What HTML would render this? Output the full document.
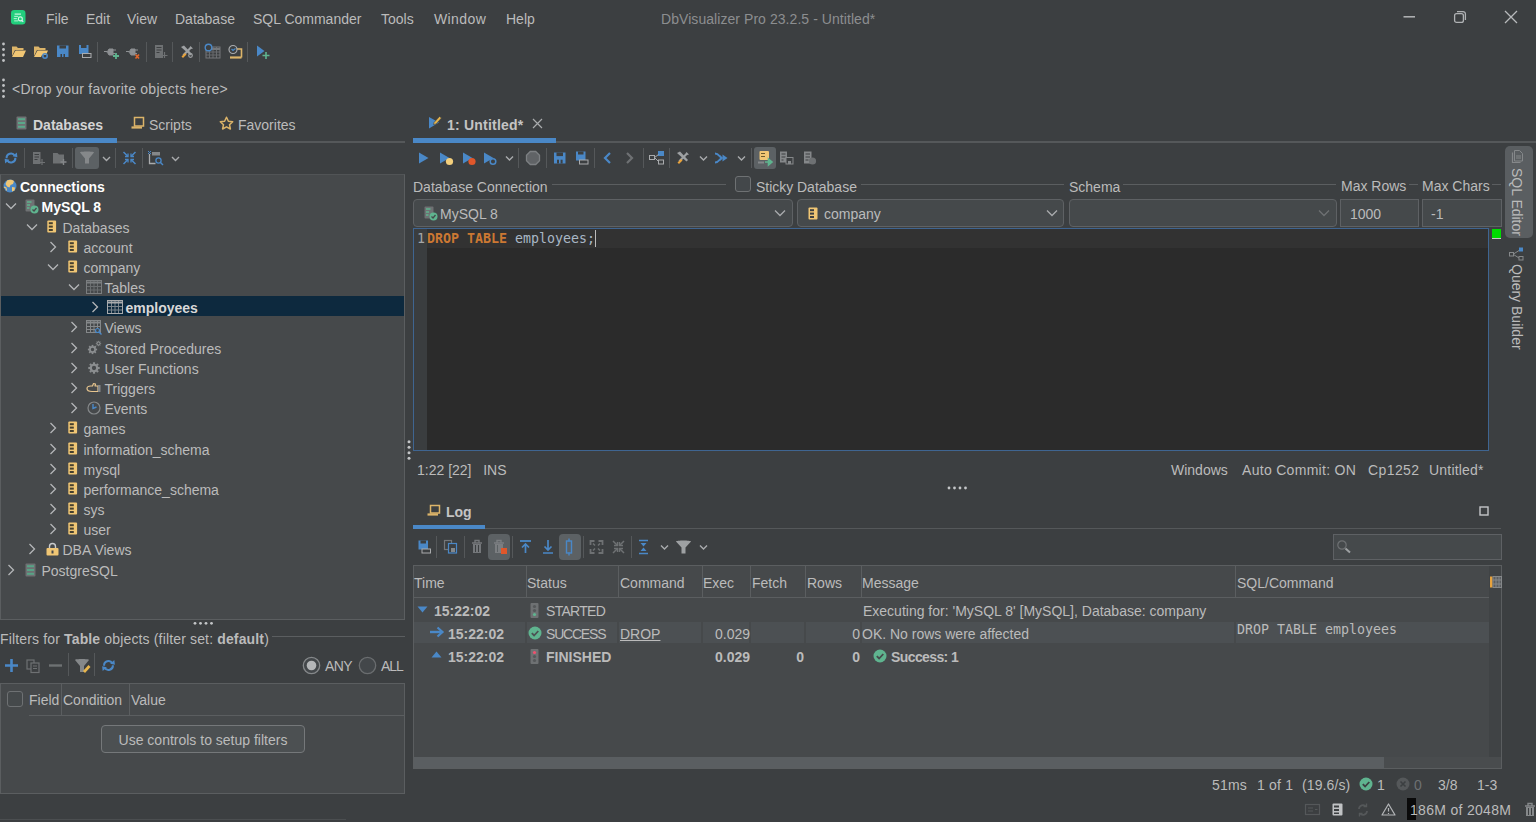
<!DOCTYPE html>
<html lang="en">
<head>
<meta charset="utf-8">
<title>DbVisualizer Pro 23.2.5 - Untitled*</title>
<style>
*{box-sizing:border-box;margin:0;padding:0}
html,body{width:1536px;height:822px;overflow:hidden;background:#3c3f41}
body{position:relative;font-family:"Liberation Sans",sans-serif;font-size:14px;color:#bbbbbb;line-height:20px}
.a{position:absolute;white-space:nowrap}
.t{position:absolute;white-space:nowrap;height:22px;line-height:22px}
.b{font-weight:bold}
.w{color:#ffffff}
.sep{position:absolute;width:1px;background:#515456}
svg{position:absolute;overflow:visible}
.mono{font-family:"DejaVu Sans Mono","Liberation Mono",monospace}
</style>
</head>
<body>
<!--TOP-->
<!-- app icon -->
<svg style="left:10.800px;top:9.500px" width="14.500" height="14.500" viewBox="0 0 16 16"><rect x="0" y="0" width="16" height="16" rx="3.500" fill="#22cf7d"/><path d="M4 4.500h7" stroke="#dffbee" stroke-width="1.200" fill="none"/><path d="M3.500 7h4.500M3 9.500h3.500M3.500 12h4.500" stroke="#b8f3d6" stroke-width="1.100" fill="none"/><circle cx="10.300" cy="9.800" r="2.200" fill="none" stroke="#d4f8e6" stroke-width="1.200"/><path d="M11.900 11.400l1.600 1.600" stroke="#e6e0ff" stroke-width="1.400"/></svg>
<div class="t" style="left:46px;top:8px">File</div>
<div class="t" style="left:86px;top:8px">Edit</div>
<div class="t" style="left:127px;top:8px">View</div>
<div class="t" style="left:175px;top:8px">Database</div>
<div class="t" style="left:253px;top:8px">SQL Commander</div>
<div class="t" style="left:381px;top:8px">Tools</div>
<div class="t" style="left:434px;top:8px;letter-spacing:0.400px">Window</div>
<div class="t" style="left:506px;top:8px">Help</div>
<div class="t" style="left:661px;top:8px;color:#8c8e90;letter-spacing:0.060px">DbVisualizer Pro 23.2.5 - Untitled*</div>
<!-- window controls -->
<svg style="left:1403px;top:10px" width="14" height="14" viewBox="0 0 14 14"><path d="M0.500 6.800h11.500" stroke="#b4b6b8" stroke-width="1.500"/></svg>
<svg style="left:1453px;top:10px" width="14" height="14" viewBox="0 0 14 14"><rect x="1.6" y="3.6" width="8.8" height="8.8" rx="2" fill="none" stroke="#b0b2b4" stroke-width="1.300"/><path d="M4 1.6h6a2.4 2.4 0 0 1 2.4 2.4v6" fill="none" stroke="#b0b2b4" stroke-width="1.300"/></svg>
<svg style="left:1503.500px;top:9.500px" width="14" height="14" viewBox="0 0 14 14"><path d="M1 1l12 12M13 1L1 13" stroke="#b8babc" stroke-width="1.300"/></svg>
<!-- main toolbar -->
<svg style="left:0;top:40px" width="280" height="24" viewBox="0 0 280 24">
<g fill="#c0c2c4"><circle cx="3.500" cy="4" r="1.400"/><circle cx="3.500" cy="9.500" r="1.400"/><circle cx="3.500" cy="15" r="1.400"/><circle cx="3.500" cy="20.500" r="1.400"/></g>
<!-- folder open -->
<path d="M12 6.5h4.5l1.5 1.5h5.5v2h-8.5l-3 6z" fill="#dcb469"/><path d="M15.5 10.5h10.5l-3 6.5h-11z" fill="#f0c674"/>
<!-- folder w gear -->
<path d="M34 6.5h4.5l1.5 1.5h5.5v2h-8.5l-3 6z" fill="#dcb469"/><path d="M37.5 10.5h10.5l-2 4.5h-4l-1 2h-7z" fill="#f0c674"/><circle cx="45" cy="16" r="2.2" fill="none" stroke="#4a88c7" stroke-width="1.6"/>
<!-- save -->
<path d="M57 5.500h11.500v11.500h-11.500z" fill="#4a88c7"/><rect x="59.500" y="5.500" width="6.500" height="3" fill="#3c3f41"/><rect x="60.500" y="14" width="1.500" height="3" fill="#3c3f41"/><rect x="63.500" y="14" width="1.500" height="3" fill="#3c3f41"/>
<!-- save as -->
<path d="M79 5h9.5v9h-9.5z" fill="#4a88c7"/><rect x="81" y="5" width="5.5" height="3" fill="#3c3f41"/><rect x="82.5" y="13.5" width="8.5" height="4" fill="#3c3f41" stroke="#a9abad" stroke-width="1"/>
<rect x="97" y="2" width="1" height="20" fill="#55585a"/>
<!-- plug + -->
<path d="M104 11.5h3.5l1.5-2.5h4v6h-4l-1.5-2.5" fill="#8d9093" stroke="#8d9093" stroke-width="1"/><path d="M113 10h3M113 13.5h2" stroke="#8d9093" stroke-width="1"/><path d="M116 13v6M113 16h6" stroke="#5fb48f" stroke-width="1.8"/>
<!-- plug x -->
<path d="M126 11.5h3.5l1.5-2.5h4v6h-4l-1.5-2.5" fill="#8d9093" stroke="#8d9093" stroke-width="1"/><path d="M135 10h3M135 13.5h2" stroke="#8d9093" stroke-width="1"/><path d="M135.500 14.500l3.500 4M139 14.500l-3.500 4" stroke="#e0662b" stroke-width="1.6"/>
<rect x="146" y="2" width="1" height="20" fill="#55585a"/>
<!-- server grey -->
<rect x="155" y="5" width="8" height="13" fill="#6e7173"/><path d="M156.500 7.500h5M156.500 10h5M156.500 12.500h3" stroke="#3c3f41" stroke-width="1"/><path d="M164.500 12v6M161.500 15.500h6" stroke="#6e7173" stroke-width="1.2"/>
<rect x="172" y="2" width="1" height="20" fill="#55585a"/>
<!-- tools -->
<path d="M181 7l3-1.500 8 8.500-1.500 1.500z" fill="#9ea1a3"/><path d="M190.500 6l2.500 2.500-2 .5-7 7-1.500-1.500 7-7z" fill="#9ea1a3"/><path d="M181.500 16.500l3.500-3.500 1.500 1.500-3.500 3.500z" fill="#e8a33d"/><circle cx="190.500" cy="15.500" r="1.800" fill="none" stroke="#9ea1a3" stroke-width="1.200"/>
<rect x="199" y="2" width="1" height="20" fill="#55585a"/>
<!-- table clock -->
<rect x="206" y="7" width="14" height="11" fill="none" stroke="#74777a" stroke-width="1"/><path d="M206 9h14" stroke="#74777a" stroke-width="2"/><path d="M206 12h14M206 15h14M209.500 7v11M213 7v11M216.500 7v11" stroke="#74777a" stroke-width="1" opacity="0.800"/><circle cx="208.500" cy="7.500" r="3.300" fill="#3c3f41" stroke="#4a88c7" stroke-width="1.400"/>
<!-- clock monitor -->
<path d="M236 9h5.500v8.500" fill="none" stroke="#dcb469" stroke-width="1.600"/><path d="M230 17.500h11.500" stroke="#dcb469" stroke-width="2.200"/><circle cx="233" cy="9.500" r="4" fill="#3c3f41" stroke="#a9abad" stroke-width="1.200"/><path d="M231.500 9l1.500 1.500 2.500-2" stroke="#4a88c7" stroke-width="1.200" fill="none"/>
<rect x="247" y="2" width="1" height="20" fill="#55585a"/>
<!-- run + -->
<path d="M257 5.500l7.500 5.500-7.500 5.500z" fill="#4a88c7"/><path d="M266 12v7M262.500 15.500h7" stroke="#5fb48f" stroke-width="1.600"/>
</svg>
<!-- favorites bar -->
<svg style="left:0;top:77px" width="8" height="22" viewBox="0 0 8 22"><g fill="#c0c2c4"><circle cx="3.500" cy="3" r="1.400"/><circle cx="3.500" cy="8.500" r="1.400"/><circle cx="3.500" cy="14" r="1.400"/><circle cx="3.500" cy="19.500" r="1.400"/></g></svg>
<div class="t" style="left:12px;top:78px;letter-spacing:0.250px">&lt;Drop your favorite objects here&gt;</div>

<!--LEFT-->
<!-- left tabs -->
<svg style="left:16px;top:116px" width="11" height="14" viewBox="0 0 11 14"><rect x="0.5" y="0.5" width="10" height="13" rx="1" fill="#6e7173"/><rect x="2" y="2.2" width="7" height="2" fill="#5aa88a"/><rect x="2" y="6" width="7" height="2" fill="#5aa88a"/><rect x="2" y="9.800" width="7" height="2" fill="#5aa88a"/></svg>
<div class="t b" style="left:33px;top:114px;color:#d4d4d4">Databases</div>
<svg style="left:131px;top:116px" width="14" height="14" viewBox="0 0 14 14"><path d="M3.500 1.500h9v8.500h-9z" fill="none" stroke="#dcb469" stroke-width="1.500"/><path d="M0.500 11.500h10.500" stroke="#dcb469" stroke-width="2.200"/></svg>
<div class="t" style="left:149px;top:114px">Scripts</div>
<svg style="left:219px;top:116px" width="15" height="14" viewBox="0 0 15 14"><path d="M7.500 1.200l1.900 4 4.300.500-3.200 3 .900 4.300-3.900-2.200-3.900 2.200.900-4.300-3.200-3 4.300-.500z" fill="none" stroke="#dcb469" stroke-width="1.500" stroke-linejoin="round"/></svg>
<div class="t" style="left:238px;top:114px">Favorites</div>
<div class="a" style="left:117px;top:141px;width:288px;height:2px;background:#55585a"></div>
<div class="a" style="left:0;top:138px;width:117px;height:5px;background:#4a88c7"></div>
<!-- left toolbar -->
<svg style="left:0;top:146px" width="190" height="24" viewBox="0 0 190 24">
<g transform="translate(11 12)"><path d="M-4.4 0.300A4.4 4.4 0 0 1 3.81 -2.20" fill="none" stroke="#4a88c7" stroke-width="2"/><path d="M1.600 -1.800L6.400 -0.800L5.800 -5.600z" fill="#4a88c7"/><g transform="rotate(180)"><path d="M-4.4 0.300A4.4 4.4 0 0 1 3.81 -2.20" fill="none" stroke="#4a88c7" stroke-width="2"/><path d="M1.600 -1.800L6.400 -0.800L5.800 -5.600z" fill="#4a88c7"/></g></g>
<rect x="24" y="2" width="1" height="20" fill="#55585a"/>
<rect x="33" y="6" width="7.500" height="12" fill="#6e7173"/><path d="M34.500 8.500h4.500M34.500 11h4.500M34.500 13.500h3" stroke="#3c3f41" stroke-width="1"/><path d="M42 13v6M39 16.500h6" stroke="#6e7173" stroke-width="1.200"/>
<path d="M53 7h4.500l1.500 1.500h5v9h-11z" fill="#6e7173"/><path d="M63.500 13v6M60.500 16h6" stroke="#85888a" stroke-width="1.400"/>
<rect x="72" y="2" width="1" height="20" fill="#55585a"/>
<rect x="75" y="1" width="24" height="22" rx="3" fill="#5c6164"/>
<path d="M80 6.500c0-1.200 14-1.200 14 0l-5 6v5h-4v-5z" fill="#85888a"/>
<path d="M103 11l3.500 3.500 3.500-3.500" fill="none" stroke="#a9abad" stroke-width="1.400"/>
<rect x="115" y="2" width="1" height="20" fill="#55585a"/>
<path d="M123.500 6l4.500 4.500M135.500 6l-4.500 4.500M123.500 18l4.500-4.500M135.500 18l-4.500-4.500" stroke="#4a88c7" stroke-width="1.500"/><path d="M125 10.500h3v-3M134 10.500h-3v-3M125 13.500h3v3M134 13.500h-3v3" fill="none" stroke="#4a88c7" stroke-width="1.300"/>
<rect x="142" y="2" width="1" height="20" fill="#55585a"/>
<path d="M149.500 8v9.500h6" fill="none" stroke="#a9abad" stroke-width="1.300"/><rect x="152" y="6" width="8" height="3.500" fill="#85888a"/><path d="M148 5l3 3M151 5l-3 3" stroke="#4a88c7" stroke-width="1"/><circle cx="158.500" cy="14.500" r="2.600" fill="none" stroke="#4a88c7" stroke-width="1.300"/><path d="M160.500 16.500l2.500 2.500" stroke="#4a88c7" stroke-width="1.400"/>
<path d="M172 11l3.500 3.500 3.500-3.500" fill="none" stroke="#a9abad" stroke-width="1.400"/>
</svg>
<!-- tree panel -->
<div class="a" style="left:0;top:174px;width:405px;height:446px;background:#46494b;border:1px solid #5b5e60;border-top:1px solid #515456"></div>
<div class="a" style="left:1px;top:296px;width:403px;height:20px;background:#0d293e"></div>
<!-- tree rows -->
<svg style="left:3px;top:179px" width="14" height="14" viewBox="0 0 14 14"><circle cx="7" cy="7" r="6.500" fill="#4a88c7"/><path d="M4 1.500c2-1 5-1 7 .500l-1 3-2.500 1-1 2.500-2.500-1-1.500-2.500z" fill="#f0c674"/><path d="M9 8l3 .500-.500 3-2.500 1z" fill="#f0c674"/><path d="M1 8l2 1 .500 2.500" fill="none" stroke="#f0c674" stroke-width="1.200"/></svg>
<div class="t b w" style="left:20px;top:176px">Connections</div>
<svg style="left:5px;top:202px" width="12" height="8" viewBox="0 0 12 8"><path d="M1 1.500l5 5 5-5" fill="none" stroke="#b4b6b8" stroke-width="1.300"/></svg>
<svg style="left:25px;top:199px" width="14" height="15" viewBox="0 0 14 15"><rect x="0.500" y="0.500" width="9" height="12" rx="1" fill="#6e7173"/><path d="M2 3h4.500M2 6h3M2 9h2.500" stroke="#5fb48f" stroke-width="1.400"/><circle cx="9.500" cy="10.500" r="4" fill="#5fb48f"/><path d="M7.500 10.500l1.500 1.500 2.500-3" fill="none" stroke="#46494b" stroke-width="1.300"/></svg>
<div class="t b w" style="left:41.5px;top:196px">MySQL 8</div>
<svg style="left:26px;top:223px" width="12" height="8" viewBox="0 0 12 8"><path d="M1 1.500l5 5 5-5" fill="none" stroke="#b4b6b8" stroke-width="1.300"/></svg>
<svg style="left:46.5px;top:219.7px" width="10" height="13" viewBox="0 0 10 13"><rect x="0.300" y="0.500" width="8.800" height="12" rx="1" fill="#f0c674"/><rect x="1.800" y="2.200" width="4" height="2" fill="#46402f"/><rect x="1.800" y="5.600" width="4" height="2" fill="#46402f"/><rect x="1.800" y="9" width="4" height="2" fill="#46402f"/></svg>
<div class="t" style="left:62.5px;top:217px">Databases</div>
<svg style="left:49px;top:241px" width="8" height="12" viewBox="0 0 8 12"><path d="M1.500 1l5 5-5 5" fill="none" stroke="#b4b6b8" stroke-width="1.300"/></svg>
<svg style="left:67.5px;top:239.7px" width="10" height="13" viewBox="0 0 10 13"><rect x="0.300" y="0.500" width="8.800" height="12" rx="1" fill="#f0c674"/><rect x="1.800" y="2.200" width="4" height="2" fill="#46402f"/><rect x="1.800" y="5.600" width="4" height="2" fill="#46402f"/><rect x="1.800" y="9" width="4" height="2" fill="#46402f"/></svg>
<div class="t" style="left:83.5px;top:237px">account</div>
<svg style="left:47px;top:263px" width="12" height="8" viewBox="0 0 12 8"><path d="M1 1.500l5 5 5-5" fill="none" stroke="#b4b6b8" stroke-width="1.300"/></svg>
<svg style="left:67.5px;top:259.7px" width="10" height="13" viewBox="0 0 10 13"><rect x="0.300" y="0.500" width="8.800" height="12" rx="1" fill="#f0c674"/><rect x="1.800" y="2.200" width="4" height="2" fill="#46402f"/><rect x="1.800" y="5.600" width="4" height="2" fill="#46402f"/><rect x="1.800" y="9" width="4" height="2" fill="#46402f"/></svg>
<div class="t" style="left:83.5px;top:257px">company</div>
<svg style="left:68px;top:283px" width="12" height="8" viewBox="0 0 12 8"><path d="M1 1.500l5 5 5-5" fill="none" stroke="#b4b6b8" stroke-width="1.300"/></svg>
<svg style="left:86px;top:280px" width="16" height="14" viewBox="0 0 16 14"><rect x="0.500" y="0.500" width="15" height="13" fill="#46494b" stroke="#7b7e80"/><path d="M0.500 2.500h15" stroke="#7b7e80" stroke-width="2"/><path d="M0 6.500h16M0 10h16M4.500 1v12M8 1v12M11.500 1v12" stroke="#7b7e80" stroke-width="1" opacity="0.700"/></svg>
<div class="t" style="left:104.5px;top:277px">Tables</div>
<svg style="left:91px;top:301px" width="8" height="12" viewBox="0 0 8 12"><path d="M1.500 1l5 5-5 5" fill="none" stroke="#b4b6b8" stroke-width="1.300"/></svg>
<svg style="left:107px;top:300px" width="16" height="14" viewBox="0 0 16 14"><rect x="0.500" y="0.500" width="15" height="13" fill="#0d293e" stroke="#a9abad"/><path d="M0.500 2.500h15" stroke="#a9abad" stroke-width="2"/><path d="M0 6.500h16M0 10h16M4.500 1v12M8 1v12M11.500 1v12" stroke="#a9abad" stroke-width="1" opacity="0.700"/></svg>
<div class="t b" style="left:125.5px;top:297px;color:#d8d8d8">employees</div>
<svg style="left:70px;top:321px" width="8" height="12" viewBox="0 0 8 12"><path d="M1.500 1l5 5-5 5" fill="none" stroke="#b4b6b8" stroke-width="1.300"/></svg>
<svg style="left:86px;top:320px" width="16" height="15" viewBox="0 0 16 15"><rect x="0.500" y="0.500" width="14" height="12" fill="#46494b" stroke="#85888a"/><path d="M0.500 2.500h14" stroke="#85888a" stroke-width="2"/><path d="M0 6.500h15M0 9.500h9M4.500 1v11M8 1v11M11.500 1v7" stroke="#85888a" stroke-width="1"/><circle cx="11.500" cy="10.500" r="2" fill="#46494b" stroke="#4a88c7" stroke-width="1.200"/><path d="M13 12l2.500 2.500" stroke="#4a88c7" stroke-width="1.400"/></svg>
<div class="t" style="left:104.5px;top:317px">Views</div>
<svg style="left:70px;top:342px" width="8" height="12" viewBox="0 0 8 12"><path d="M1.500 1l5 5-5 5" fill="none" stroke="#b4b6b8" stroke-width="1.300"/></svg>
<svg style="left:87px;top:340px" width="15" height="15" viewBox="0 0 15 15"><g><circle cx="5.5" cy="9.5" r="2.604" fill="none" stroke="#8b8e90" stroke-width="1.764"/><path d="M8.65 9.50L10.12 9.50" stroke="#8b8e90" stroke-width="1.764"/><path d="M7.73 11.73L8.77 12.77" stroke="#8b8e90" stroke-width="1.764"/><path d="M5.50 12.65L5.50 14.12" stroke="#8b8e90" stroke-width="1.764"/><path d="M3.27 11.73L2.23 12.77" stroke="#8b8e90" stroke-width="1.764"/><path d="M2.35 9.50L0.88 9.50" stroke="#8b8e90" stroke-width="1.764"/><path d="M3.27 7.27L2.23 6.23" stroke="#8b8e90" stroke-width="1.764"/><path d="M5.50 6.35L5.50 4.88" stroke="#8b8e90" stroke-width="1.764"/><path d="M7.73 7.27L8.77 6.23" stroke="#8b8e90" stroke-width="1.764"/></g><g><circle cx="11.5" cy="3.5" r="1.488" fill="none" stroke="#8b8e90" stroke-width="1.008"/><path d="M13.30 3.50L14.14 3.50" stroke="#8b8e90" stroke-width="1.008"/><path d="M12.77 4.77L13.37 5.37" stroke="#8b8e90" stroke-width="1.008"/><path d="M11.50 5.30L11.50 6.14" stroke="#8b8e90" stroke-width="1.008"/><path d="M10.23 4.77L9.63 5.37" stroke="#8b8e90" stroke-width="1.008"/><path d="M9.70 3.50L8.86 3.50" stroke="#8b8e90" stroke-width="1.008"/><path d="M10.23 2.23L9.63 1.63" stroke="#8b8e90" stroke-width="1.008"/><path d="M11.50 1.70L11.50 0.86" stroke="#8b8e90" stroke-width="1.008"/><path d="M12.77 2.23L13.37 1.63" stroke="#8b8e90" stroke-width="1.008"/></g></svg>
<div class="t" style="left:104.5px;top:338px">Stored Procedures</div>
<svg style="left:70px;top:362px" width="8" height="12" viewBox="0 0 8 12"><path d="M1.500 1l5 5-5 5" fill="none" stroke="#b4b6b8" stroke-width="1.300"/></svg>
<svg style="left:87px;top:361px" width="14" height="14" viewBox="0 0 14 14"><g><circle cx="7" cy="7" r="3.224" fill="none" stroke="#8b8e90" stroke-width="2.184"/><path d="M10.90 7.00L12.72 7.00" stroke="#8b8e90" stroke-width="2.184"/><path d="M9.76 9.76L11.04 11.04" stroke="#8b8e90" stroke-width="2.184"/><path d="M7.00 10.90L7.00 12.72" stroke="#8b8e90" stroke-width="2.184"/><path d="M4.24 9.76L2.96 11.04" stroke="#8b8e90" stroke-width="2.184"/><path d="M3.10 7.00L1.28 7.00" stroke="#8b8e90" stroke-width="2.184"/><path d="M4.24 4.24L2.96 2.96" stroke="#8b8e90" stroke-width="2.184"/><path d="M7.00 3.10L7.00 1.28" stroke="#8b8e90" stroke-width="2.184"/><path d="M9.76 4.24L11.04 2.96" stroke="#8b8e90" stroke-width="2.184"/></g></svg>
<div class="t" style="left:104.5px;top:358px">User Functions</div>
<svg style="left:70px;top:382px" width="8" height="12" viewBox="0 0 8 12"><path d="M1.500 1l5 5-5 5" fill="none" stroke="#b4b6b8" stroke-width="1.300"/></svg>
<svg style="left:86px;top:382px" width="15" height="12" viewBox="0 0 15 12"><path d="M1 6.500c0-1.500 1.500-2.500 3.500-2.500h2l1-2.500 2 .500-.500 2h3v5.500h-6c-3 0-5-1-5-3z" fill="none" stroke="#e8c68f" stroke-width="1.200" stroke-linejoin="round"/><rect x="12" y="3" width="2.500" height="7" fill="#85888a"/></svg>
<div class="t" style="left:104.5px;top:378px">Triggers</div>
<svg style="left:70px;top:402px" width="8" height="12" viewBox="0 0 8 12"><path d="M1.500 1l5 5-5 5" fill="none" stroke="#b4b6b8" stroke-width="1.300"/></svg>
<svg style="left:87px;top:401px" width="14" height="14" viewBox="0 0 14 14"><circle cx="7" cy="7" r="6" fill="none" stroke="#85888a" stroke-width="1.200"/><path d="M6 3v4.500l3.500-1.500" fill="none" stroke="#4a88c7" stroke-width="1.400"/></svg>
<div class="t" style="left:104.5px;top:398px">Events</div>
<svg style="left:49px;top:422px" width="8" height="12" viewBox="0 0 8 12"><path d="M1.500 1l5 5-5 5" fill="none" stroke="#b4b6b8" stroke-width="1.300"/></svg>
<svg style="left:67.5px;top:420.7px" width="10" height="13" viewBox="0 0 10 13"><rect x="0.300" y="0.500" width="8.800" height="12" rx="1" fill="#f0c674"/><rect x="1.800" y="2.200" width="4" height="2" fill="#46402f"/><rect x="1.800" y="5.600" width="4" height="2" fill="#46402f"/><rect x="1.800" y="9" width="4" height="2" fill="#46402f"/></svg>
<div class="t" style="left:83.5px;top:418px">games</div>
<svg style="left:49px;top:443px" width="8" height="12" viewBox="0 0 8 12"><path d="M1.500 1l5 5-5 5" fill="none" stroke="#b4b6b8" stroke-width="1.300"/></svg>
<svg style="left:67.5px;top:441.7px" width="10" height="13" viewBox="0 0 10 13"><rect x="0.300" y="0.500" width="8.800" height="12" rx="1" fill="#f0c674"/><rect x="1.800" y="2.200" width="4" height="2" fill="#46402f"/><rect x="1.800" y="5.600" width="4" height="2" fill="#46402f"/><rect x="1.800" y="9" width="4" height="2" fill="#46402f"/></svg>
<div class="t" style="left:83.5px;top:439px">information_schema</div>
<svg style="left:49px;top:463px" width="8" height="12" viewBox="0 0 8 12"><path d="M1.500 1l5 5-5 5" fill="none" stroke="#b4b6b8" stroke-width="1.300"/></svg>
<svg style="left:67.5px;top:461.7px" width="10" height="13" viewBox="0 0 10 13"><rect x="0.300" y="0.500" width="8.800" height="12" rx="1" fill="#f0c674"/><rect x="1.800" y="2.200" width="4" height="2" fill="#46402f"/><rect x="1.800" y="5.600" width="4" height="2" fill="#46402f"/><rect x="1.800" y="9" width="4" height="2" fill="#46402f"/></svg>
<div class="t" style="left:83.5px;top:459px">mysql</div>
<svg style="left:49px;top:483px" width="8" height="12" viewBox="0 0 8 12"><path d="M1.500 1l5 5-5 5" fill="none" stroke="#b4b6b8" stroke-width="1.300"/></svg>
<svg style="left:67.5px;top:481.7px" width="10" height="13" viewBox="0 0 10 13"><rect x="0.300" y="0.500" width="8.800" height="12" rx="1" fill="#f0c674"/><rect x="1.800" y="2.200" width="4" height="2" fill="#46402f"/><rect x="1.800" y="5.600" width="4" height="2" fill="#46402f"/><rect x="1.800" y="9" width="4" height="2" fill="#46402f"/></svg>
<div class="t" style="left:83.5px;top:479px">performance_schema</div>
<svg style="left:49px;top:503px" width="8" height="12" viewBox="0 0 8 12"><path d="M1.500 1l5 5-5 5" fill="none" stroke="#b4b6b8" stroke-width="1.300"/></svg>
<svg style="left:67.5px;top:501.7px" width="10" height="13" viewBox="0 0 10 13"><rect x="0.300" y="0.500" width="8.800" height="12" rx="1" fill="#f0c674"/><rect x="1.800" y="2.200" width="4" height="2" fill="#46402f"/><rect x="1.800" y="5.600" width="4" height="2" fill="#46402f"/><rect x="1.800" y="9" width="4" height="2" fill="#46402f"/></svg>
<div class="t" style="left:83.5px;top:499px">sys</div>
<svg style="left:49px;top:523px" width="8" height="12" viewBox="0 0 8 12"><path d="M1.500 1l5 5-5 5" fill="none" stroke="#b4b6b8" stroke-width="1.300"/></svg>
<svg style="left:67.5px;top:521.7px" width="10" height="13" viewBox="0 0 10 13"><rect x="0.300" y="0.500" width="8.800" height="12" rx="1" fill="#f0c674"/><rect x="1.800" y="2.200" width="4" height="2" fill="#46402f"/><rect x="1.800" y="5.600" width="4" height="2" fill="#46402f"/><rect x="1.800" y="9" width="4" height="2" fill="#46402f"/></svg>
<div class="t" style="left:83.5px;top:519px">user</div>
<svg style="left:28px;top:543px" width="8" height="12" viewBox="0 0 8 12"><path d="M1.500 1l5 5-5 5" fill="none" stroke="#b4b6b8" stroke-width="1.300"/></svg>
<svg style="left:46px;top:542px" width="13" height="14" viewBox="0 0 13 14"><path d="M3.500 6.500v-2a3 3 0 0 1 6 0v2" fill="none" stroke="#c9cbcd" stroke-width="1.400"/><rect x="0.500" y="6" width="12" height="7.500" rx="1" fill="#f0c674"/><rect x="5.500" y="8.500" width="2" height="3" fill="#46494b"/></svg>
<div class="t" style="left:62.5px;top:539px">DBA Views</div>
<svg style="left:7px;top:564px" width="8" height="12" viewBox="0 0 8 12"><path d="M1.500 1l5 5-5 5" fill="none" stroke="#b4b6b8" stroke-width="1.300"/></svg>
<svg style="left:25px;top:562.5px" width="11" height="14" viewBox="0 0 11 14"><rect x="0.500" y="0.500" width="10" height="13" rx="1" fill="#6e7173"/><rect x="2" y="2.200" width="7" height="2" fill="#58a386"/><rect x="2" y="6" width="7" height="2" fill="#58a386"/><rect x="2" y="9.800" width="7" height="2" fill="#58a386"/></svg>
<div class="t" style="left:41.5px;top:560px">PostgreSQL</div>
<svg style="left:193px;top:620px" width="22" height="6" viewBox="0 0 22 6"><g fill="#c4c6c8"><circle cx="2" cy="3.300" r="1.400"/><circle cx="7.500" cy="3.300" r="1.400"/><circle cx="13" cy="3.300" r="1.400"/><circle cx="18.500" cy="3.300" r="1.400"/></g></svg>
<!-- filter section -->
<div class="t" style="left:0;top:628px;letter-spacing:0.150px">Filters for <b>Table</b> objects (filter set: <b>default</b>)</div>
<div class="a" style="left:272px;top:636px;width:133px;height:1px;background:#5b5e60"></div>
<svg style="left:0;top:654px" width="130" height="24" viewBox="0 0 130 24">
<path d="M11.500 5v13M5 11.500h13" stroke="#4a88c7" stroke-width="2.600"/>
<rect x="27" y="6" width="7" height="9" fill="none" stroke="#6e7173" stroke-width="1.200"/><rect x="31" y="9" width="8" height="9.500" fill="#3c3f41" stroke="#6e7173" stroke-width="1.200"/><path d="M33 12h4M33 14.500h4" stroke="#6e7173"/>
<path d="M49 11.500h13" stroke="#6e7173" stroke-width="2.400"/>
<rect x="68" y="-1" width="1" height="23" fill="#55585a"/>
<path d="M75 6c0-1.200 14-1.200 14 0l-5 6v6h-4v-6z" fill="#85888a"/><path d="M83 17l5.500-6 2 2-5.500 6z" fill="#e8b64d"/>
<rect x="94" y="-1" width="1" height="23" fill="#55585a"/>
<g transform="translate(108.5 11.5)"><path d="M-4.4 0.300A4.4 4.4 0 0 1 3.81 -2.20" fill="none" stroke="#4a88c7" stroke-width="2"/><path d="M1.600 -1.800L6.400 -0.800L5.800 -5.600z" fill="#4a88c7"/><g transform="rotate(180)"><path d="M-4.4 0.300A4.4 4.4 0 0 1 3.81 -2.20" fill="none" stroke="#4a88c7" stroke-width="2"/><path d="M1.600 -1.800L6.400 -0.800L5.800 -5.600z" fill="#4a88c7"/></g></g>
</svg>
<svg style="left:302px;top:656px" width="19" height="19" viewBox="0 0 19 19"><circle cx="9.500" cy="9.500" r="8.200" fill="#43474a" stroke="#85888a" stroke-width="1.300"/><circle cx="9.500" cy="9.500" r="4.800" fill="#b4b6b8"/></svg>
<div class="t" style="left:325px;top:655px;letter-spacing:-0.600px">ANY</div>
<svg style="left:358px;top:656px" width="19" height="19" viewBox="0 0 19 19"><circle cx="9.500" cy="9.500" r="8.200" fill="#43474a" stroke="#6a6d6f" stroke-width="1.300"/></svg>
<div class="t" style="left:381px;top:655px;letter-spacing:-1px">ALL</div>
<div class="a" style="left:0;top:683px;width:405px;height:111px;background:#46494b;border:1px solid #5b5e60"></div>
<div class="a" style="left:7px;top:691px;width:16px;height:16px;border:1px solid #6e7173;border-radius:3px;background:#45494b"></div>
<div class="t" style="left:29px;top:689px">Field</div>
<div class="a" style="left:61px;top:684px;width:1px;height:31px;background:#5b5e60"></div>
<div class="t" style="left:63px;top:689px">Condition</div>
<div class="a" style="left:129px;top:684px;width:1px;height:31px;background:#5b5e60"></div>
<div class="t" style="left:131px;top:689px">Value</div>
<div class="a" style="left:29px;top:715px;width:375px;height:1px;background:#5b5e60"></div>
<div class="a" style="left:101px;top:725px;width:204px;height:28px;border:1px solid #75787a;border-radius:4px;background:#4c5052;text-align:center;line-height:27px;padding-top:1px">Use controls to setup filters</div>
<div class="a" style="left:0;top:819px;width:346px;height:1px;background:#4b4e50"></div>
<!--/LEFT-->
<!--EDITOR-->
<!-- editor tab -->
<svg style="left:428px;top:115px" width="14" height="15" viewBox="0 0 14 15"><path d="M1 2l10 5.500-10 6z" fill="#4a88c7"/><path d="M6 7.500l5.500-6 2 1.500-5.500 6-2.500.500z" fill="#e8b64d" stroke="#3c3f41" stroke-width="0.600"/></svg>
<div class="t b" style="left:447px;top:114px;color:#c4c4c4;letter-spacing:0.220px">1: Untitled*</div>
<svg style="left:532px;top:118px" width="11" height="11" viewBox="0 0 11 11"><path d="M1 1l9 9M10 1l-9 9" stroke="#a9abad" stroke-width="1.200"/></svg>
<div class="a" style="left:556px;top:141px;width:980px;height:2px;background:#55585a"></div>
<div class="a" style="left:413px;top:138px;width:143px;height:5px;background:#4a88c7"></div>
<!-- editor toolbar -->
<svg style="left:413px;top:146px" width="420" height="24" viewBox="413 0 420 24">
<path d="M419 6.500l9.500 5.500-9.500 5.500z" fill="#4a88c7"/>
<path d="M440 6.500l9.500 5.500-9.500 5.500z" fill="#4a88c7"/><circle cx="449.500" cy="15.500" r="3.600" fill="#f3cf7c"/>
<path d="M463 6.500l9.500 5.500-9.500 5.500z" fill="#4a88c7"/><circle cx="472" cy="15.500" r="3.600" fill="#e0572b"/>
<path d="M484 6.500l9.500 5.500-9.500 5.500z" fill="#4a88c7"/><circle cx="493" cy="15.500" r="2.800" fill="#3c3f41" stroke="#4a88c7" stroke-width="1.500"/>
<path d="M506 10.500l3.500 3.500 3.500-3.500" fill="none" stroke="#a9abad" stroke-width="1.400"/>
<rect x="518" y="2" width="1" height="20" fill="#55585a"/>
<path d="M530.300 5.500h5.400l3.800 3.800v5.400l-3.800 3.800h-5.400l-3.800-3.800v-5.400z" fill="#606366" stroke="#7d8083" stroke-width="1.300"/>
<rect x="546" y="2" width="1" height="20" fill="#55585a"/>
<path d="M554 6.500h11.500v11h-11.500z" fill="#4a88c7"/><rect x="556.500" y="6.500" width="6.500" height="3.600" fill="#3c3f41"/><rect x="557" y="13.700" width="2" height="3.800" fill="#3c3f41"/><rect x="560.600" y="13.700" width="2" height="3.800" fill="#3c3f41"/>
<path d="M576 5.500h9.500v9h-9.500z" fill="#4a88c7"/><rect x="578" y="5.500" width="5.500" height="3" fill="#3c3f41"/><rect x="579.500" y="14" width="8.500" height="4" fill="#3c3f41" stroke="#a9abad" stroke-width="1"/>
<rect x="594" y="2" width="1" height="20" fill="#55585a"/>
<path d="M610 7l-5 5 5 5" fill="none" stroke="#4a88c7" stroke-width="2.200"/>
<path d="M627 7l5 5-5 5" fill="none" stroke="#6e7173" stroke-width="2.200"/>
<rect x="643" y="2" width="1" height="20" fill="#55585a"/>
<rect x="649.500" y="9.500" width="5" height="4" fill="none" stroke="#a9abad"/><rect x="658" y="5" width="6" height="5" fill="#4a88c7"/><rect x="658.500" y="14" width="5" height="4" fill="none" stroke="#a9abad"/><path d="M654.500 11.500l4-3M654.500 11.500l4 4" stroke="#a9abad"/>
<rect x="669" y="2" width="1" height="20" fill="#55585a"/>
<path d="M677 7l3-1.500 8 8.500-1.500 1.500z" fill="#9ea1a3"/><path d="M686.500 6l2.500 2.500-2 .5-7 7-1.500-1.500 7-7z" fill="#9ea1a3"/><path d="M677.500 16.500l3.500-3.500 1.500 1.500-3.500 3.500z" fill="#e8a33d"/>
<path d="M700 10.500l3.500 3.500 3.500-3.500" fill="none" stroke="#a9abad" stroke-width="1.400"/>
<path d="M715 7.500c4.500 0 4.500 4.500 7.500 4.500M715 16.500c4.500 0 4.500-4.500 7.500-4.500" fill="none" stroke="#4a88c7" stroke-width="1.800"/><path d="M722.500 8.500l5 3.500-5 3.500z" fill="#4a88c7"/><path d="M719.500 9.500l2.500 2.500-2.500 2.500" fill="none" stroke="#4a88c7" stroke-width="1.300"/>
<path d="M738 10.500l3.500 3.500 3.500-3.500" fill="none" stroke="#a9abad" stroke-width="1.400"/>
<rect x="751" y="2" width="1" height="20" fill="#55585a"/>
<rect x="754" y="1" width="22" height="22" rx="3" fill="#5c6164"/>
<rect x="759.500" y="5" width="9.500" height="9" rx="1" fill="#f0c674"/><path d="M761 7.500h4M761 10.500h4" stroke="#6b5a2e" stroke-width="1.200"/><path d="M758 16.500h6" stroke="#85888a" stroke-width="2"/><path d="M765 16h5M768.500 13l3.500 3-3.500 3z" stroke="#5fb48f" stroke-width="1.600" fill="#5fb48f"/>
<rect x="780" y="5.500" width="7" height="11" fill="#85888a"/><path d="M781.500 8h4M781.500 11h4M781.500 14h2" stroke="#3c3f41"/><rect x="786" y="11.500" width="7" height="6.500" fill="#3c3f41" stroke="#85888a"/><rect x="788" y="15" width="3" height="3" fill="#85888a"/>
<rect x="804" y="5.500" width="7.500" height="12" fill="#85888a"/><path d="M805.500 8h4.500M805.500 11h4.500M805.500 14h3" stroke="#3c3f41"/><circle cx="812.500" cy="15" r="3.600" fill="#6e7173"/>
</svg>
<!-- editor labels -->
<div class="t" style="left:413px;top:176px">Database Connection</div>
<div class="a" style="left:552px;top:184px;width:174px;height:1px;background:#5b5e60"></div>
<div class="a" style="left:735px;top:176px;width:16px;height:16px;border:1px solid #6e7173;border-radius:3px;background:#43474a"></div>
<div class="t" style="left:756px;top:176px">Sticky</div>
<div class="t" style="left:797px;top:176px">Database</div>
<div class="a" style="left:861px;top:184px;width:203px;height:1px;background:#5b5e60"></div>
<div class="t" style="left:1069px;top:176px">Schema</div>
<div class="a" style="left:1123px;top:184px;width:213px;height:1px;background:#5b5e60"></div>
<div class="t" style="left:1341px;top:175px">Max Rows</div>
<div class="a" style="left:1409px;top:184px;width:9px;height:1px;background:#5b5e60"></div>
<div class="t" style="left:1422px;top:175px">Max Chars</div>
<div class="a" style="left:1492px;top:184px;width:9px;height:1px;background:#5b5e60"></div>
<!-- combos -->
<div class="a" style="left:413px;top:199px;width:380px;height:28px;background:#45494b;border:1px solid #5e6164;border-radius:4px"></div>
<div class="a" style="left:797px;top:199px;width:267px;height:28px;background:#45494b;border:1px solid #5e6164;border-radius:4px"></div>
<div class="a" style="left:1069px;top:199px;width:268px;height:28px;background:#45494b;border:1px solid #5e6164;border-radius:4px"></div>
<div class="a" style="left:1340px;top:199px;width:79px;height:28px;background:#45494b;border:1px solid #5e6164;"></div>
<div class="a" style="left:1422px;top:199px;width:80px;height:28px;background:#45494b;border:1px solid #5e6164;"></div>
<svg style="left:424px;top:206px" width="14" height="15" viewBox="0 0 14 15"><rect x="0.500" y="0.500" width="9" height="12" rx="1" fill="#6e7173"/><path d="M2 3h4.500M2 6h3M2 9h2.500" stroke="#5fb48f" stroke-width="1.400"/><circle cx="9.500" cy="10.500" r="4" fill="#5fb48f"/><path d="M7.500 10.500l1.500 1.500 2.500-3" fill="none" stroke="#45494b" stroke-width="1.300"/></svg>
<div class="t" style="left:440px;top:203px">MySQL 8</div>
<svg style="left:774px;top:209px" width="12" height="8" viewBox="0 0 12 8"><path d="M1 1.500l5 5 5-5" fill="none" stroke="#a9abad" stroke-width="1.300"/></svg>
<svg style="left:808px;top:207px" width="10" height="13" viewBox="0 0 10 13"><rect x="0.500" y="0.500" width="9" height="12" rx="1" fill="#f0c674"/><rect x="2" y="2.200" width="4" height="2" fill="#3c3f41"/><rect x="2" y="5.600" width="4" height="2" fill="#3c3f41"/><rect x="2" y="9" width="4" height="2" fill="#3c3f41"/></svg>
<div class="t" style="left:824px;top:203px">company</div>
<svg style="left:1046px;top:209px" width="12" height="8" viewBox="0 0 12 8"><path d="M1 1.500l5 5 5-5" fill="none" stroke="#a9abad" stroke-width="1.300"/></svg>
<svg style="left:1318px;top:209px" width="12" height="8" viewBox="0 0 12 8"><path d="M1 1.500l5 5 5-5" fill="none" stroke="#6e7173" stroke-width="1.300"/></svg>
<div class="t" style="left:1350px;top:203px">1000</div>
<div class="t" style="left:1431px;top:203px">-1</div>
<!-- sql editor -->
<div class="a" style="left:413px;top:228px;width:1076px;height:223px;background:#2b2b2b;border:1px solid #3f6591"></div>
<div class="a" style="left:427px;top:229px;width:1061px;height:19px;background:#323232"></div>
<div class="a" style="left:414px;top:229px;width:13px;height:221px;background:#3a3d3f"></div>
<div class="t mono" style="left:417px;top:228px;font-size:13.290px;color:#a4a6a8">1</div>
<div class="t mono" style="left:427px;top:228px;font-size:13.290px;color:#a9b7c6"><b style="color:#cc7832">DROP TABLE</b> employees;</div>
<div class="a" style="left:595px;top:230px;width:1px;height:17px;background:#bbbbbb"></div>
<div class="a" style="left:1492px;top:229px;width:9px;height:9px;background:#00dc00;box-shadow:0 1px 0 #c8c8c8"></div>
<!-- side tabs -->
<div class="a" style="left:1505px;top:146px;width:28px;height:92px;background:#5a5e61;border-radius:5px"></div>
<svg style="left:1511px;top:150px" width="12" height="14" viewBox="0 0 12 14"><path d="M1.500 2.500v10h8" fill="none" stroke="#85888a" stroke-width="1.200"/><path d="M3.500 0.500h5l3 3v7.500h-8z" fill="none" stroke="#85888a" stroke-width="1"/><path d="M5 6h5M5 8h5" stroke="#85888a" stroke-width="1"/></svg>
<div class="a" style="left:1527px;top:168px;transform:rotate(90deg);transform-origin:0 0;height:20px;line-height:20px">SQL Editor</div>
<svg style="left:1509px;top:247px" width="15" height="14" viewBox="0 0 15 14"><rect x="0.500" y="5.500" width="4" height="3.500" fill="none" stroke="#85888a"/><rect x="10" y="0.500" width="4" height="4" fill="#4a88c7"/><rect x="10" y="9.500" width="4" height="3.500" fill="none" stroke="#85888a"/><path d="M4.500 7l5.500-3.500M4.500 7.500l5.500 3.500" stroke="#85888a"/></svg>
<div class="a" style="left:1527px;top:264px;transform:rotate(90deg);transform-origin:0 0;height:20px;line-height:20px">Query Builder</div>
<svg style="left:405.600px;top:438px" width="6" height="24" viewBox="0 0 6 24"><g fill="#c4c6c8"><circle cx="3" cy="3.800" r="1.500"/><circle cx="3" cy="9.200" r="1.500"/><circle cx="3" cy="14.700" r="1.500"/><circle cx="3" cy="20.300" r="1.500"/></g></svg>
<div class="t" style="left:417px;top:459px">1:22 [22]&nbsp;&nbsp; INS</div>
<div class="t" style="left:1171px;top:459px">Windows</div>
<div class="t" style="left:1242px;top:459px;letter-spacing:0.300px">Auto Commit: ON</div>
<div class="t" style="left:1368px;top:459px;letter-spacing:0.400px">Cp1252</div>
<div class="t" style="left:1429px;top:459px;letter-spacing:0.200px">Untitled*</div>
<svg style="left:947px;top:484.600px" width="22" height="6" viewBox="0 0 22 6"><g fill="#c4c6c8"><circle cx="2" cy="3" r="1.400"/><circle cx="7.500" cy="3" r="1.400"/><circle cx="13" cy="3" r="1.400"/><circle cx="18.500" cy="3" r="1.400"/></g></svg>
<!--/EDITOR-->
<!--LOG-->
<!-- log tab -->
<svg style="left:427px;top:504px" width="14" height="13" viewBox="0 0 14 13"><path d="M3.500 1.500h9v7.500h-9z" fill="none" stroke="#dcb469" stroke-width="1.500"/><path d="M0.500 10.500h10.500" stroke="#dcb469" stroke-width="2.200"/></svg>
<div class="t b" style="left:446px;top:501px;color:#c4c4c4">Log</div>
<div class="a" style="left:484px;top:528px;width:1017px;height:1px;background:#55585a"></div>
<div class="a" style="left:413px;top:525px;width:72px;height:4px;background:#4a88c7"></div>
<svg style="left:1479px;top:506px" width="10" height="10" viewBox="0 0 10 10"><rect x="1" y="1" width="8" height="8" fill="none" stroke="#c4c6c8" stroke-width="1.400"/></svg>
<!-- log toolbar -->
<svg style="left:413px;top:534px" width="300" height="26" viewBox="413 0 300 26">
<path d="M418.500 6.500h9.500v9h-9.500z" fill="#4a88c7"/><rect x="420.500" y="6.500" width="5.500" height="3" fill="#3c3f41"/><rect x="422" y="15" width="8.500" height="4" fill="#3c3f41" stroke="#a9abad" stroke-width="1"/>
<rect x="436" y="2" width="1" height="22" fill="#55585a"/>
<rect x="444.500" y="6.500" width="7" height="9" fill="none" stroke="#74777a" stroke-width="1.200"/><rect x="448.500" y="9.500" width="8" height="9.500" fill="#3c3f41" stroke="#4a88c7" stroke-width="1.200"/><rect x="451" y="14" width="4" height="4" fill="#85888a"/>
<rect x="464" y="2" width="1" height="22" fill="#55585a"/>
<path d="M472 9h10M475 8.500v-2h4v2" fill="none" stroke="#74777a" stroke-width="1.400"/><rect x="473" y="10" width="8" height="9" fill="#74777a"/><path d="M475.500 11v7M478.500 11v7" stroke="#3c3f41"/>
<rect x="488" y="0" width="22" height="26" rx="4" fill="#5c6164"/>
<path d="M494 9h10M497 8.500v-2h4v2" fill="none" stroke="#7b7e81" stroke-width="1.400"/><rect x="495" y="10" width="8" height="9" fill="#7b7e81"/><path d="M497.500 11v7" stroke="#5c6164"/><rect x="501" y="14" width="6" height="6" fill="#e0572b"/>
<rect x="512" y="2" width="1" height="22" fill="#55585a"/>
<path d="M520 7h11" stroke="#4a88c7" stroke-width="1.800"/><path d="M525.500 19v-9M522 13.500l3.500-3.500 3.500 3.500" fill="none" stroke="#4a88c7" stroke-width="1.700"/>
<path d="M543 19h10" stroke="#4a88c7" stroke-width="1.500"/><path d="M548 6v10M544.500 12.500l3.500 3.500 3.500-3.500" fill="none" stroke="#4a88c7" stroke-width="1.700"/>
<rect x="559" y="0" width="22" height="26" rx="4" fill="#5c6164"/>
<rect x="566.500" y="7" width="5" height="12" fill="none" stroke="#4a88c7" stroke-width="1.400"/><path d="M569 4.500v3M569 18.500v3" stroke="#4a88c7" stroke-width="1.400"/>
<rect x="583" y="2" width="1" height="22" fill="#55585a"/>
<path d="M590.500 11v-4h4M602.500 11v-4h-4M590.500 15v4h4M602.500 15v4h-4" fill="none" stroke="#6e7173" stroke-width="1.800"/><path d="M593 9.500l2 2M600 9.500l-2 2M593 16.500l2-2M600 16.500l-2-2" stroke="#6e7173" stroke-width="1.500"/>
<path d="M613 7l4 4M624 7l-4 4M613 19l4-4M624 19l-4-4" stroke="#6e7173" stroke-width="1.500"/><path d="M614 11.500h3.500v-3.500M623 11.500h-3.500v-3.500M614 14.500h3.500v3.500M623 14.500h-3.500v3.500" fill="none" stroke="#6e7173" stroke-width="1.400"/>
<rect x="631" y="2" width="1" height="22" fill="#55585a"/>
<path d="M639 6.500h9M639 19.500h9" stroke="#4a88c7" stroke-width="1.500"/><path d="M640.500 9h6l-3 3.500zM640.500 17h6l-3-3.500z" fill="#4a88c7"/>
<path d="M661 11.500l3.500 3.500 3.500-3.500" fill="none" stroke="#a9abad" stroke-width="1.400"/>
<path d="M676 7.500c0-1.300 15-1.300 15 0l-5.500 6v6h-4v-6z" fill="#9ea1a3"/>
<path d="M700 11.500l3.500 3.500 3.500-3.500" fill="none" stroke="#a9abad" stroke-width="1.400"/>
</svg>
<div class="a" style="left:1333px;top:534px;width:168.500px;height:26px;background:#45494b;border:1px solid #5e6164"></div>
<svg style="left:1336px;top:539px" width="16" height="16" viewBox="0 0 16 16"><circle cx="6" cy="6" r="4.200" fill="none" stroke="#6e7173" stroke-width="1.200"/><path d="M9.500 9.500l4.500 4" stroke="#9ea1a3" stroke-width="2"/></svg>
<!-- log table -->
<div class="a" style="left:413px;top:565px;width:1089px;height:204px;background:#46494b;border:1px solid #5b5e60"></div>
<div class="a" style="left:1489px;top:566px;width:12px;height:191px;background:#404345"></div>
<div class="a" style="left:414px;top:597px;width:1075px;height:1px;background:#5b5e60"></div>
<div class="a" style="left:526px;top:566px;width:1px;height:31px;background:#5b5e60"></div>
<div class="a" style="left:618px;top:566px;width:1px;height:31px;background:#5b5e60"></div>
<div class="a" style="left:702px;top:566px;width:1px;height:31px;background:#5b5e60"></div>
<div class="a" style="left:750px;top:566px;width:1px;height:31px;background:#5b5e60"></div>
<div class="a" style="left:805px;top:566px;width:1px;height:31px;background:#5b5e60"></div>
<div class="a" style="left:861px;top:566px;width:1px;height:31px;background:#5b5e60"></div>
<div class="a" style="left:1235px;top:566px;width:1px;height:31px;background:#5b5e60"></div>
<div class="t" style="left:414px;top:572px">Time</div>
<div class="t" style="left:527px;top:572px">Status</div>
<div class="t" style="left:620px;top:572px">Command</div>
<div class="t" style="left:703px;top:572px">Exec</div>
<div class="t" style="left:752px;top:572px">Fetch</div>
<div class="t" style="left:807px;top:572px">Rows</div>
<div class="t" style="left:862px;top:572px">Message</div>
<div class="t" style="left:1237px;top:572px">SQL/Command</div>
<svg style="left:1489.500px;top:576px" width="12" height="12" viewBox="0 0 12 12"><rect x="0" y="0.500" width="2.500" height="11" fill="#e8a33d"/><rect x="3" y="0.500" width="8.500" height="11" fill="#5a5d60" stroke="#85888a"/><path d="M3 4h9M3 8h9M6 1v11M9 1v11" stroke="#85888a" stroke-width="1"/></svg>
<div class="a" style="left:414px;top:622px;width:111px;height:21px;background:#4c5053"></div>
<div class="a" style="left:527px;top:622px;width:90px;height:21px;background:#4c5053"></div>
<div class="a" style="left:619px;top:622px;width:82px;height:21px;background:#4c5053"></div>
<div class="a" style="left:703px;top:622px;width:46px;height:21px;background:#4c5053"></div>
<div class="a" style="left:751px;top:622px;width:53px;height:21px;background:#4c5053"></div>
<div class="a" style="left:806px;top:622px;width:54px;height:21px;background:#4c5053"></div>
<div class="a" style="left:862px;top:622px;width:372px;height:21px;background:#4c5053"></div>
<div class="a" style="left:1236px;top:622px;width:253px;height:21px;background:#4c5053"></div>
<svg style="left:417px;top:606px" width="11" height="7" viewBox="0 0 11 7"><path d="M0.500 0.500h10l-5 6z" fill="#4a88c7"/></svg>
<div class="t b" style="left:434px;top:600px">15:22:02</div>
<svg style="left:530px;top:602.5px" width="9" height="15" viewBox="0 0 9 15"><rect x="0.500" y="0" width="8" height="15" rx="1" fill="#6e7173"/><circle cx="4.500" cy="3.500" r="1.600" fill="#55585a"/><circle cx="4.500" cy="7.500" r="1.600" fill="#55585a"/><circle cx="4.500" cy="11.500" r="1.600" fill="#5fb48f"/></svg>
<div class="t" style="left:546px;top:600px;letter-spacing:-0.700px">STARTED</div>
<div class="t" style="left:863px;top:600px">Executing for: 'MySQL 8' [MySQL], Database: company</div>
<svg style="left:430px;top:626px" width="14" height="12" viewBox="0 0 14 12"><path d="M0 6h11" stroke="#4a88c7" stroke-width="2.400"/><path d="M7.500 1.500l5 4.500-5 4.500" fill="none" stroke="#4a88c7" stroke-width="2.200"/></svg>
<div class="t b" style="left:448px;top:623px">15:22:02</div>
<svg style="left:528px;top:625.5px" width="14" height="14" viewBox="0 0 14 14"><circle cx="7" cy="7" r="6.500" fill="#5fb48f"/><path d="M3.800 7.200l2.300 2.300 4.200-4.500" fill="none" stroke="#4c5053" stroke-width="1.800"/></svg>
<div class="t" style="left:546px;top:623px;letter-spacing:-1.200px">SUCCESS</div>
<div class="t" style="left:620px;top:623px;text-decoration:underline">DROP</div>
<div class="t" style="left:650px;top:623px;width:100px;text-align:right">0.029</div>
<div class="t" style="left:760px;top:623px;width:100px;text-align:right">0</div>
<div class="t" style="left:862px;top:623px">OK. No rows were affected</div>
<div class="t mono" style="left:1237px;top:619px;font-size:13.290px">DROP TABLE employees</div>
<svg style="left:431px;top:651px" width="11" height="7" viewBox="0 0 11 7"><path d="M0.500 6.500h10l-5-6z" fill="#4a88c7"/></svg>
<div class="t b" style="left:448px;top:646px">15:22:02</div>
<svg style="left:530px;top:648.5px" width="9" height="15" viewBox="0 0 9 15"><rect x="0.500" y="0" width="8" height="15" rx="1" fill="#6e7173"/><circle cx="4.500" cy="3.500" r="1.600" fill="#f0506e"/><circle cx="4.500" cy="7.500" r="1.600" fill="#55585a"/><circle cx="4.500" cy="11.500" r="1.600" fill="#55585a"/></svg>
<div class="t b" style="left:546px;top:646px">FINISHED</div>
<div class="t b" style="left:650px;top:646px;width:100px;text-align:right">0.029</div>
<div class="t b" style="left:704px;top:646px;width:100px;text-align:right">0</div>
<div class="t b" style="left:760px;top:646px;width:100px;text-align:right">0</div>
<svg style="left:873px;top:649px" width="14" height="14" viewBox="0 0 14 14"><circle cx="7" cy="7" r="6.500" fill="#5fb48f"/><path d="M3.800 7.200l2.300 2.300 4.200-4.500" fill="none" stroke="#46494b" stroke-width="1.800"/></svg>
<div class="t b" style="left:891px;top:646px;letter-spacing:-0.600px">Success: 1</div>
<div class="a" style="left:414px;top:757px;width:1087px;height:11px;background:#494c4e"></div>
<div class="a" style="left:414px;top:757px;width:970px;height:11px;background:#5a5e61"></div>
<!--/LOG-->
<!--STATUS-->
<!-- status line -->
<div class="t" style="left:1212px;top:774px;letter-spacing:0.200px">51ms</div>
<div class="t" style="left:1257px;top:774px;letter-spacing:0.200px">1 of 1</div>
<div class="t" style="left:1302px;top:774px;letter-spacing:0.100px">(19.6/s)</div>
<svg style="left:1359px;top:777px" width="14" height="14" viewBox="0 0 14 14"><circle cx="7" cy="7" r="6.500" fill="#5fb48f"/><path d="M3.800 7.200l2.300 2.300 4.200-4.500" fill="none" stroke="#3c3f41" stroke-width="1.800"/></svg>
<div class="t" style="left:1377px;top:774px">1</div>
<svg style="left:1396px;top:777px" width="14" height="14" viewBox="0 0 14 14"><circle cx="7" cy="7" r="6.500" fill="#55585a"/><path d="M4.500 4.500l5 5M9.500 4.500l-5 5" stroke="#3c3f41" stroke-width="1.600"/></svg>
<div class="t" style="left:1414px;top:774px;color:#6e7173">0</div>
<div class="t" style="left:1438px;top:774px">3/8</div>
<div class="t" style="left:1477px;top:774px">1-3</div>
<!-- bottom bar -->
<svg style="left:1305px;top:803px" width="15" height="13" viewBox="0 0 15 13"><rect x="0.500" y="1.500" width="14" height="10" fill="none" stroke="#55585a" stroke-width="1.200"/><path d="M3 5h5M3 8h5M10 6.500h2.500" stroke="#55585a" stroke-width="1.200"/></svg>
<svg style="left:1332px;top:803px" width="12" height="14" viewBox="0 0 12 14"><rect x="0.500" y="0.500" width="10" height="12" rx="1" fill="#c0c2c4"/><rect x="2" y="2.500" width="5" height="2" fill="#3c3f41"/><rect x="2" y="6" width="5" height="2" fill="#3c3f41"/><rect x="2" y="9.500" width="5" height="1.500" fill="#3c3f41"/></svg>
<svg style="left:1357px;top:803px" width="12" height="14" viewBox="0 0 12 14"><path d="M2 6a4 4 0 0 1 7-2.500M10 8a4 4 0 0 1-7 2.500" fill="none" stroke="#55585a" stroke-width="1.800"/><path d="M6.500 3.500h3v-3M5.500 10.500h-3v3" fill="none" stroke="#55585a" stroke-width="1.400"/></svg>
<svg style="left:1381px;top:803px" width="15" height="13" viewBox="0 0 15 13"><path d="M7.500 1l6.500 11h-13z" fill="none" stroke="#b4b6b8" stroke-width="1.200" stroke-linejoin="round"/><path d="M7.500 5v3.500M7.500 10v1" stroke="#b4b6b8" stroke-width="1.200"/></svg>
<div class="a" style="left:1407px;top:798px;width:8.500px;height:22px;background:#0a0a0a"></div>
<div class="t" style="left:1410px;top:799px;letter-spacing:0.300px">186M of 2048M</div>
<svg style="left:1524px;top:803px" width="12" height="14" viewBox="0 0 12 14"><path d="M1 3h10M4 2.500v-2h4v2" fill="none" stroke="#85888a" stroke-width="1.400"/><rect x="2" y="4" width="8" height="9" fill="#85888a"/><path d="M4.500 5v7M7.500 5v7" stroke="#3c3f41"/></svg>
<!--/STATUS-->
</body>
</html>
